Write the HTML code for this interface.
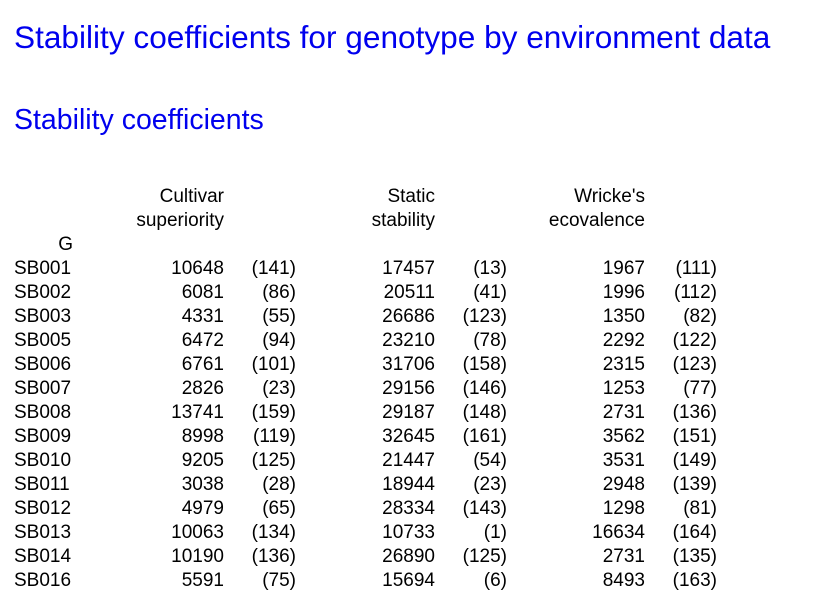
<!DOCTYPE html>
<html><head><meta charset="utf-8"><style>
body{margin:0;width:815px;height:593px;background:#fff;font-family:"Liberation Sans",Arial,sans-serif;position:relative;overflow:hidden}
.h1{position:absolute;left:14px;top:18px;font-size:31.6px;color:#0000ee;white-space:nowrap;line-height:38px}
.h2{position:absolute;left:14px;top:103px;font-size:28.5px;color:#0000ee;white-space:nowrap;line-height:34px}
.t{position:absolute;font-size:19px;color:#000;white-space:nowrap;line-height:24px}
.r{text-align:right}
</style></head><body>
<div class="h1">Stability coefficients for genotype by environment data</div>
<div class="h2">Stability coefficients</div>
<div class="t r" style="left:100px;width:124px;top:185px">Cultivar<br>superiority</div>
<div class="t r" style="left:330px;width:105px;top:185px">Static<br>stability</div>
<div class="t r" style="left:520px;width:125px;top:185px">Wricke's<br>ecovalence</div>
<div class="t r" style="left:14px;width:59px;top:233px">G</div>
<div class="t" style="left:14px;top:257px">SB001<br>SB002<br>SB003<br>SB005<br>SB006<br>SB007<br>SB008<br>SB009<br>SB010<br>SB011<br>SB012<br>SB013<br>SB014<br>SB016</div>
<div class="t r" style="left:124px;width:100px;top:257px">10648<br>6081<br>4331<br>6472<br>6761<br>2826<br>13741<br>8998<br>9205<br>3038<br>4979<br>10063<br>10190<br>5591</div>
<div class="t r" style="left:236px;width:60px;top:257px">(141)<br>(86)<br>(55)<br>(94)<br>(101)<br>(23)<br>(159)<br>(119)<br>(125)<br>(28)<br>(65)<br>(134)<br>(136)<br>(75)</div>
<div class="t r" style="left:335px;width:100px;top:257px">17457<br>20511<br>26686<br>23210<br>31706<br>29156<br>29187<br>32645<br>21447<br>18944<br>28334<br>10733<br>26890<br>15694</div>
<div class="t r" style="left:447px;width:60px;top:257px">(13)<br>(41)<br>(123)<br>(78)<br>(158)<br>(146)<br>(148)<br>(161)<br>(54)<br>(23)<br>(143)<br>(1)<br>(125)<br>(6)</div>
<div class="t r" style="left:545px;width:100px;top:257px">1967<br>1996<br>1350<br>2292<br>2315<br>1253<br>2731<br>3562<br>3531<br>2948<br>1298<br>16634<br>2731<br>8493</div>
<div class="t r" style="left:657px;width:60px;top:257px">(111)<br>(112)<br>(82)<br>(122)<br>(123)<br>(77)<br>(136)<br>(151)<br>(149)<br>(139)<br>(81)<br>(164)<br>(135)<br>(163)</div>
</body></html>
